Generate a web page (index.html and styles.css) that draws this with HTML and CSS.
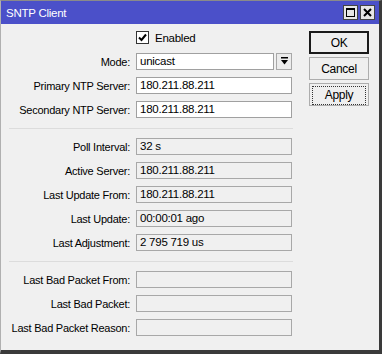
FILE: index.html
```html
<!DOCTYPE html>
<html lang="en">
<head>
    <meta charset="UTF-8">
    <title>SNTP Client</title>
    <link rel="stylesheet" href="styles.css">
</head>
<body>
<div class="window">
    <div class="titlebar">
        <span class="title">SNTP Client</span>
        <div class="title-buttons">
            <span class="tbtn">
                <svg width="13" height="13" viewBox="0 0 13 13"><rect x="2.5" y="2.5" width="8" height="8" fill="none" stroke="#000" stroke-width="1"/><rect x="2" y="2" width="9" height="2" fill="#000"/></svg>
            </span>
            <span class="tbtn">
                <svg width="13" height="13" viewBox="0 0 13 13"><path d="M3 3 L10 10 M10 3 L3 10" stroke="#000" stroke-width="2"/></svg>
            </span>
        </div>
    </div>
    <div class="content">
        <div class="form">
            <div class="row">
                <span class="label"></span>
                <label class="check">
                    <span class="box">
                        <svg width="11" height="11" viewBox="0 0 11 11"><path d="M2 5.5 L4.5 8 L9 2.5" fill="none" stroke="#000" stroke-width="2"/></svg>
                    </span>
                    Enabled
                </label>
            </div>
            <div class="row">
                <span class="label">Mode:</span>
                <div class="select">
                    <span class="field edit grow">unicast</span>
                    <span class="drop">
                        <svg width="9" height="9" viewBox="0 0 9 9"><rect x="1" y="0" width="7" height="1.5" fill="#000"/><path d="M1 3 L8 3 L4.5 7.5 Z" fill="#000"/></svg>
                    </span>
                </div>
            </div>
            <div class="row">
                <span class="label">Primary NTP Server:</span>
                <span class="field edit">180.211.88.211</span>
            </div>
            <div class="row">
                <span class="label">Secondary NTP Server:</span>
                <span class="field edit">180.211.88.211</span>
            </div>

            <hr class="sep">

            <div class="row">
                <span class="label">Poll Interval:</span>
                <span class="field">32 s</span>
            </div>
            <div class="row">
                <span class="label">Active Server:</span>
                <span class="field">180.211.88.211</span>
            </div>
            <div class="row">
                <span class="label">Last Update From:</span>
                <span class="field">180.211.88.211</span>
            </div>
            <div class="row">
                <span class="label">Last Update:</span>
                <span class="field">00:00:01 ago</span>
            </div>
            <div class="row">
                <span class="label">Last Adjustment:</span>
                <span class="field">2 795 719 us</span>
            </div>

            <hr class="sep">

            <div class="row">
                <span class="label">Last Bad Packet From:</span>
                <span class="field"></span>
            </div>
            <div class="row">
                <span class="label">Last Bad Packet:</span>
                <span class="field"></span>
            </div>
            <div class="row">
                <span class="label">Last Bad Packet Reason:</span>
                <span class="field"></span>
            </div>
        </div>
        <div class="buttons">
            <button class="btn default">OK</button>
            <button class="btn">Cancel</button>
            <button class="btn focus"><span>Apply</span></button>
        </div>
    </div>
</div>
</body>
</html>
```

FILE: styles.css
```css
body {
    margin: 0;
    font-family: "Liberation Sans", Arial, sans-serif;
    font-size: 11px;
    letter-spacing: -0.25px;
    color: #000;
    background: #f0f0f0;
}
.window {
    width: 382px;
    height: 354px;
    box-sizing: border-box;
    border-top: 1px solid #8a8a8a;
    border-left: 1px solid #b0b0b0;
    border-right: 3px solid #3a3a3a;
    border-bottom: 4px solid #3a3a3a;
    background: #f0f0f0;
    overflow: hidden;
}
.titlebar {
    height: 23px;
    background: #4b50c9;
    display: flex;
    align-items: center;
    justify-content: space-between;
    padding: 0 4px 0 5px;
}
.title {
    color: #fff;
    font-size: 11.5px;
}
.title-buttons {
    display: flex;
    gap: 2px;
}
.tbtn {
    width: 15px;
    height: 15px;
    box-sizing: border-box;
    border: 1px solid #444;
    background: #e6e6e6;
    display: flex;
    align-items: center;
    justify-content: center;
}
.content {
    display: flex;
    padding: 5px 0 0 7px;
}
.form {
    width: 285px;
    display: flex;
    flex-direction: column;
    gap: 7px;
}
.row {
    display: flex;
    align-items: center;
    height: 17px;
}
.label {
    width: 128px;
    box-sizing: border-box;
    text-align: right;
    padding-right: 6px;
    white-space: nowrap;
}
.field {
    width: 156px;
    height: 17px;
    box-sizing: border-box;
    border: 1px solid #a8a8a8;
    background: #f0f0f0;
    padding: 0 3px;
    line-height: 15px;
    font-size: 11.5px;
    white-space: nowrap;
}
.field.edit {
    background: #fff;
    border-color: #a0a0a0;
}
.select {
    width: 156px;
    display: flex;
    gap: 2px;
}
.select .grow {
    width: auto;
    flex: 1;
}
.drop {
    width: 16px;
    height: 17px;
    box-sizing: border-box;
    border: 1px solid #a8a8a8;
    background: #ececec;
    display: flex;
    align-items: center;
    justify-content: center;
}
.check {
    display: flex;
    align-items: center;
    gap: 6px;
    font-size: 11.5px;
}
.box {
    width: 13px;
    height: 13px;
    box-sizing: border-box;
    border: 1px solid #333;
    background: #fff;
    display: flex;
    align-items: center;
    justify-content: center;
}
.sep {
    margin: 3px 0 2px 1px;
    border: 0;
    border-top: 1px solid #dcdcdc;
    width: 284px;
}
.buttons {
    display: flex;
    flex-direction: column;
    gap: 3px;
    padding: 2px 0 0 16px;
}
.btn {
    width: 60px;
    height: 23px;
    box-sizing: border-box;
    font-family: "Liberation Sans", Arial, sans-serif;
    font-size: 12px;
    letter-spacing: -0.3px;
    background: #efefef;
    border: 1px solid #adadad;
    padding: 0;
    color: #000;
}
.btn.default {
    border: 2px solid #1a1a1a;
}
.btn.focus span {
    display: block;
    margin: 2px;
    height: 17px;
    line-height: 17px;
    border: 1px dotted #333;
}
```
